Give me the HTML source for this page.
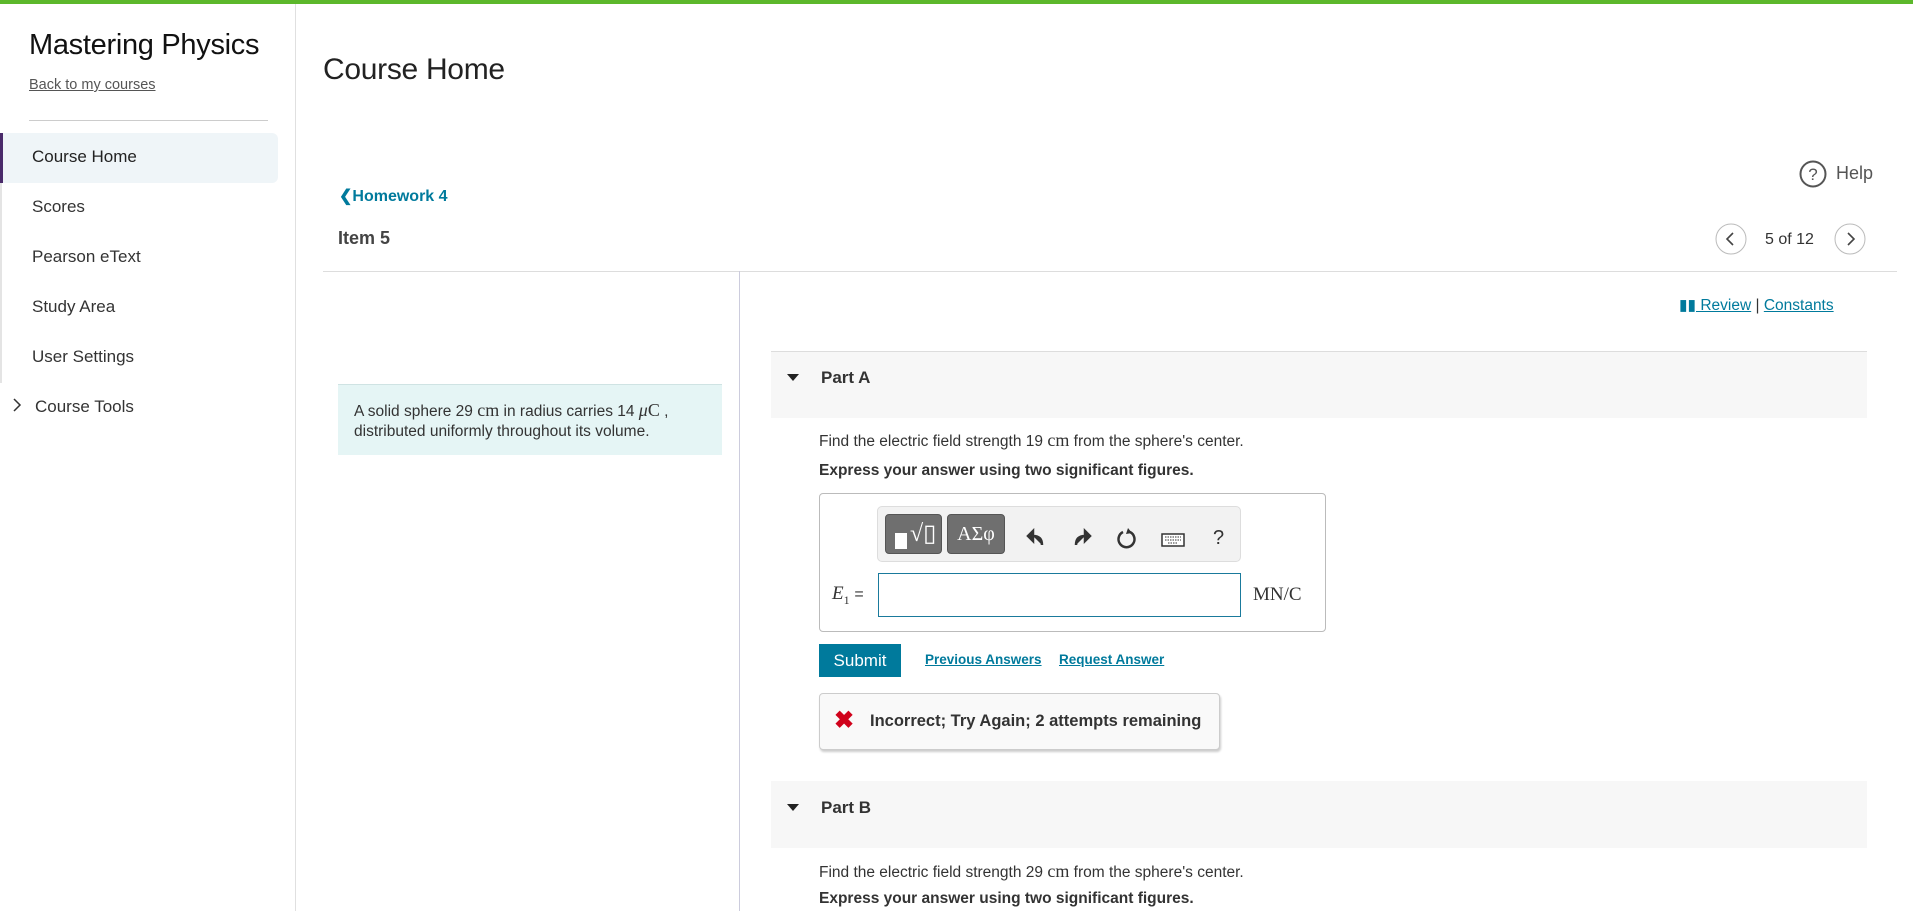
<!DOCTYPE html>
<html><head><meta charset="utf-8"><style>
*{margin:0;padding:0;box-sizing:border-box}
body{width:1913px;height:911px;overflow:hidden;background:#fff;font-family:"Liberation Sans",sans-serif;color:#222;position:relative}
.a{position:absolute;white-space:nowrap}
.nav{position:absolute;left:32px;font-size:17px;color:#333}
.serif{font-family:"Liberation Serif",serif}
.lnk{color:#007a9c;text-decoration:underline}
</style></head><body>
<div class="a" style="left:0;top:0;width:1913px;height:4px;background:#5cb82b"></div>
<div class="a" style="left:295px;top:4px;width:1px;height:907px;background:#e0e0e0"></div>
<div class="a" style="left:0;top:183px;width:2px;height:200px;background:#e4e4e4"></div>
<div class="a" style="left:29px;top:29px;font-size:29px;color:#111;letter-spacing:-0.3px">Mastering Physics</div>
<div class="a" style="left:29px;top:77px;font-size:14.5px;color:#555;text-decoration:underline">Back to my courses</div>
<div class="a" style="left:29px;top:120px;width:239px;height:1px;background:#ccc"></div>
<div class="a" style="left:0;top:133px;width:278px;height:50px;background:#eff5f8;border-left:3px solid #4a2a6a;border-radius:0 6px 6px 0"></div>
<div class="nav" style="top:147px;color:#222">Course Home</div>
<div class="nav" style="top:197px">Scores</div>
<div class="nav" style="top:247px">Pearson eText</div>
<div class="nav" style="top:297px">Study Area</div>
<div class="nav" style="top:347px">User Settings</div>
<div class="nav" style="top:397px;left:35px">Course Tools</div>
<svg class="a" style="left:12px;top:397px" width="10" height="16"><path d="M2 2l6 6-6 6" fill="none" stroke="#333" stroke-width="1.5"/></svg>

<div class="a" style="left:323px;top:53px;font-size:30px;color:#222;letter-spacing:-0.3px">Course Home</div>
<svg class="a" style="left:1799px;top:160px" width="28" height="28"><circle cx="14" cy="14" r="12.5" fill="none" stroke="#555" stroke-width="2"/><text x="14" y="20" text-anchor="middle" font-size="17" font-family="Liberation Sans" fill="#555">?</text></svg>
<div class="a" style="left:1836px;top:163px;font-size:18px;color:#555">Help</div>
<div class="a" style="left:339px;top:186px;font-size:16px;font-weight:bold;color:#007a9c">❮Homework 4</div>
<div class="a" style="left:338px;top:228px;font-size:18px;font-weight:bold;color:#444">Item 5</div>
<svg class="a" style="left:1715px;top:223px" width="32" height="32"><circle cx="16" cy="16" r="15" fill="#fff" stroke="#bbb"/><path d="M18 10l-6 6 6 6" fill="none" stroke="#444" stroke-width="1.6"/></svg>
<div class="a" style="left:1765px;top:231px;font-size:16px;color:#333">5 of 12</div>
<svg class="a" style="left:1834px;top:223px" width="32" height="32"><circle cx="16" cy="16" r="15" fill="#fff" stroke="#bbb"/><path d="M14 10l6 6-6 6" fill="none" stroke="#444" stroke-width="1.6"/></svg>
<div class="a" style="left:323px;top:271px;width:1574px;height:1px;background:#ddd"></div>
<div class="a" style="left:739px;top:271px;width:1px;height:640px;background:#ccd"></div>

<div class="a" style="left:338px;top:384px;width:384px;height:71px;background:#e5f5f5;border-top:1px solid #cfe3e3"></div>
<div class="a" style="left:354px;top:400px;font-size:15.5px;color:#333;line-height:20px">A solid sphere 29 <span class="serif" style="font-size:18px">cm</span> in radius carries 14 <span class="serif" style="font-size:18px"><i>μ</i>C</span> ,<br>distributed uniformly throughout its volume.</div>

<div class="a" style="left:1679px;top:296px;font-size:15.5px;color:#333"><span class="lnk">▮▮ Review</span> | <span class="lnk">Constants</span></div>

<div class="a" style="left:771px;top:351px;width:1096px;height:67px;background:#f7f7f7;border-top:1px solid #ddd"></div>
<svg class="a" style="left:786px;top:373px" width="14" height="10"><path d="M1 1h12L7 8z" fill="#222"/></svg>
<div class="a" style="left:821px;top:368px;font-size:17px;font-weight:bold;color:#333">Part A</div>
<div class="a" style="left:819px;top:430px;font-size:15.5px;color:#333">Find the electric field strength 19 <span class="serif" style="font-size:18px">cm</span> from the sphere's center.</div>
<div class="a" style="left:819px;top:462px;font-size:15.5px;font-weight:bold;color:#333">Express your answer using two significant figures.</div>

<div class="a" style="left:819px;top:493px;width:507px;height:139px;border:1px solid #bbb;border-radius:4px"></div>
<div class="a" style="left:877px;top:506px;width:364px;height:56px;background:#f2f2f2;border:1px solid #ddd;border-radius:5px"></div>
<div class="a" style="left:885px;top:514px;width:57px;height:40px;background:#6f6f6f;border-radius:4px;border:1px solid #555;color:#fff"><div class="a" style="left:9px;top:18px;width:12px;height:16px;background:#fff"></div><div class="a serif" style="left:24px;top:4px;font-size:24px">√▯</div></div>
<div class="a serif" style="left:947px;top:514px;width:58px;height:40px;background:#6f6f6f;border-radius:4px;border:1px solid #555;color:#fff;font-size:20px;text-align:center;line-height:38px">ΑΣφ</div>
<svg class="a" style="left:1026px;top:528px" width="20" height="20"><path d="M16 17c0-6-3-9-9-9M7 3L2 8l5 5z" fill="#333" stroke="#333" stroke-width="2.5"/></svg>
<svg class="a" style="left:1072px;top:528px" width="20" height="20"><path d="M4 17c0-6 3-9 9-9M13 3l5 5-5 5z" fill="#333" stroke="#333" stroke-width="2.5"/></svg>
<svg class="a" style="left:1116px;top:526px" width="22" height="24"><path d="M7 6a8 8 0 1 0 7 0" fill="none" stroke="#333" stroke-width="2.5"/><path d="M12 2l4 5-6 1z" fill="#333"/></svg>
<svg class="a" style="left:1161px;top:533px" width="24" height="14"><rect x="1" y="1" width="22" height="12" fill="#fff" stroke="#333" stroke-width="1.5"/><path d="M4 4h16M4 7h16M7 10h10" stroke="#333" stroke-dasharray="1.5 1"/></svg>
<div class="a" style="left:1213px;top:527px;font-size:20px;color:#333">?</div>
<div class="a serif" style="left:832px;top:583px;font-size:19px;color:#333"><i>E</i><sub style="font-size:12px">1</sub> <span style="font-family:'Liberation Sans';font-size:16px">=</span></div>
<div class="a" style="left:878px;top:573px;width:363px;height:44px;border:1.5px solid #1a7a9c"></div>
<div class="a serif" style="left:1253px;top:584px;font-size:19px;color:#333">MN/C</div>

<div class="a" style="left:819px;top:644px;width:82px;height:33px;background:#007a9c;color:#fff;font-size:17px;text-align:center;line-height:33px">Submit</div>
<div class="a lnk" style="left:925px;top:652px;font-size:13.5px;font-weight:bold">Previous Answers</div>
<div class="a lnk" style="left:1059px;top:652px;font-size:13.5px;font-weight:bold">Request Answer</div>
<div class="a" style="left:819px;top:693px;width:401px;height:57px;background:#f9f9f9;border:1px solid #ccc;border-radius:4px;box-shadow:1px 2px 2px #ccc"></div>
<div class="a" style="left:834px;top:706px;font-size:24px;font-weight:bold;color:#d0021b">✖</div>
<div class="a" style="left:870px;top:712px;font-size:16.5px;font-weight:bold;color:#333">Incorrect; Try Again; 2 attempts remaining</div>

<div class="a" style="left:771px;top:781px;width:1096px;height:67px;background:#f7f7f7"></div>
<svg class="a" style="left:786px;top:803px" width="14" height="10"><path d="M1 1h12L7 8z" fill="#222"/></svg>
<div class="a" style="left:821px;top:798px;font-size:17px;font-weight:bold;color:#333">Part B</div>
<div class="a" style="left:819px;top:861px;font-size:15.5px;color:#333">Find the electric field strength 29 <span class="serif" style="font-size:18px">cm</span> from the sphere's center.</div>
<div class="a" style="left:819px;top:890px;font-size:15.5px;font-weight:bold;color:#333">Express your answer using two significant figures.</div>
</body></html>
